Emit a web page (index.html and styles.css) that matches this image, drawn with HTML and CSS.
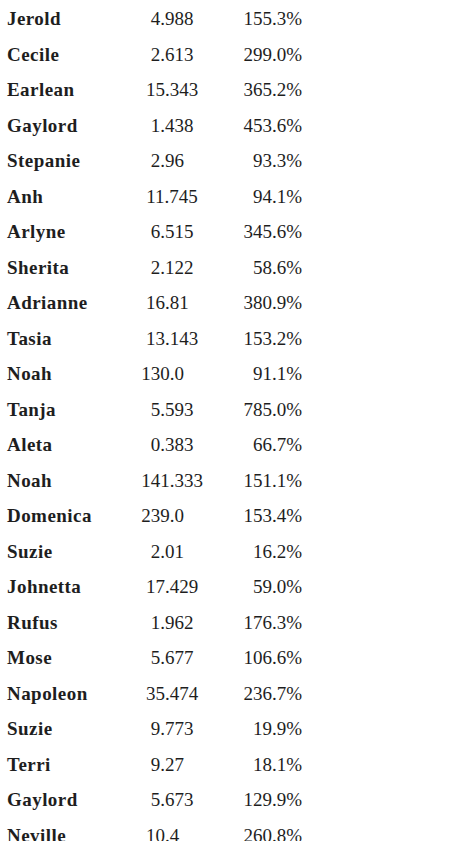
FILE: index.html
```html
<!DOCTYPE html>
<html lang="en">
<head>
<meta charset="utf-8">
<title>Table</title>
<link rel="stylesheet" href="styles.css">
</head>
<body>
<div class="table">
  <div class="name">Jerold</div><div class="num">4.988</div><div class="pct">155.3%</div>
  <div class="name">Cecile</div><div class="num">2.613</div><div class="pct">299.0%</div>
  <div class="name">Earlean</div><div class="num">15.343</div><div class="pct">365.2%</div>
  <div class="name">Gaylord</div><div class="num">1.438</div><div class="pct">453.6%</div>
  <div class="name">Stepanie</div><div class="num pad1">2.96</div><div class="pct">93.3%</div>
  <div class="name">Anh</div><div class="num">11.745</div><div class="pct">94.1%</div>
  <div class="name">Arlyne</div><div class="num">6.515</div><div class="pct">345.6%</div>
  <div class="name">Sherita</div><div class="num">2.122</div><div class="pct">58.6%</div>
  <div class="name">Adrianne</div><div class="num pad1">16.81</div><div class="pct">380.9%</div>
  <div class="name">Tasia</div><div class="num">13.143</div><div class="pct">153.2%</div>
  <div class="name">Noah</div><div class="num pad2">130.0</div><div class="pct">91.1%</div>
  <div class="name">Tanja</div><div class="num">5.593</div><div class="pct">785.0%</div>
  <div class="name">Aleta</div><div class="num">0.383</div><div class="pct">66.7%</div>
  <div class="name">Noah</div><div class="num">141.333</div><div class="pct">151.1%</div>
  <div class="name">Domenica</div><div class="num pad2">239.0</div><div class="pct">153.4%</div>
  <div class="name">Suzie</div><div class="num pad1">2.01</div><div class="pct">16.2%</div>
  <div class="name">Johnetta</div><div class="num">17.429</div><div class="pct">59.0%</div>
  <div class="name">Rufus</div><div class="num">1.962</div><div class="pct">176.3%</div>
  <div class="name">Mose</div><div class="num">5.677</div><div class="pct">106.6%</div>
  <div class="name">Napoleon</div><div class="num">35.474</div><div class="pct">236.7%</div>
  <div class="name">Suzie</div><div class="num">9.773</div><div class="pct">19.9%</div>
  <div class="name">Terri</div><div class="num pad1">9.27</div><div class="pct">18.1%</div>
  <div class="name">Gaylord</div><div class="num">5.673</div><div class="pct">129.9%</div>
  <div class="name">Neville</div><div class="num pad2">10.4</div><div class="pct">260.8%</div>
</div>
</body>
</html>
```
FILE: styles.css
```css
html, body {
  margin: 0;
  padding: 0;
  background: #ffffff;
}

body {
  font-family: "Liberation Serif", "Times New Roman", serif;
  font-size: 19px;
  color: #1e1e1e;
}

.table {
  display: grid;
  grid-template-columns: 118px 94px 83px;
  grid-auto-rows: 35.5px;
  align-items: center;
  padding: 1.5px 0 0 7px;
}

.name {
  font-weight: bold;
  text-align: left;
  letter-spacing: 0.45px;
}

.num {
  text-align: center;
}

.num.pad1 {
  padding-right: 0.5em;
}

.num.pad2 {
  padding-right: 1em;
}

.pct {
  text-align: right;
}
```
